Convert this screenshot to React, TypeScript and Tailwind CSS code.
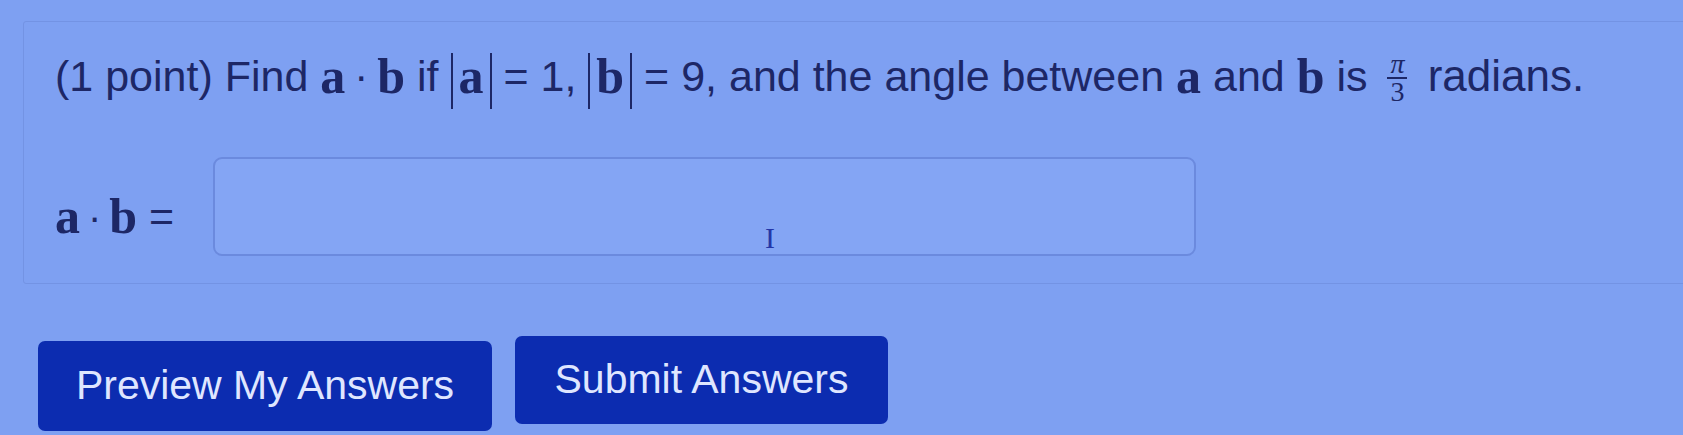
import React from "react";

const sans = { fontFamily: '"Liberation Sans", Arial, sans-serif' };
const serif = { fontFamily: '"Liberation Serif", "DejaVu Serif", serif' };

// bold vector letter
function B({ children }: { children: React.ReactNode }) {
  return (
    <span className="font-bold text-[50px]" style={serif}>
      {children}
    </span>
  );
}

function Abs({ children }: { children: React.ReactNode }) {
  return (
    <span className="inline-flex items-center">
      <span className="inline-block w-[2px] h-[56px] bg-[#1d2766] mr-[6px] translate-y-[5px]" />
      {children}
      <span className="inline-block w-[2px] h-[56px] bg-[#1d2766] ml-[6px] translate-y-[5px]" />
    </span>
  );
}

export default function App() {
  return (
    <div className="w-[1683px] h-[435px] overflow-hidden bg-[#7ea0f2] text-[#1d2766]" style={sans}>
      {/* problem box */}
      <div className="ml-[23px] mt-[21px] w-[1700px] h-[263px] border border-[#7393e4] rounded-[3px] pl-[31px] pt-[22px]">
        <p className="text-[43px] leading-[64px] whitespace-nowrap flex items-center">
          <span>(1 point) Find&nbsp;</span>
          <B>a</B>
          <span className="mx-[9px] text-[42px]">·</span>
          <B>b</B>
          <span>&nbsp;if&nbsp;</span>
          <Abs><B>a</B></Abs>
          <span>&nbsp;= 1,&nbsp;</span>
          <Abs><B>b</B></Abs>
          <span>&nbsp;= 9, and the angle between&nbsp;</span>
          <B>a</B>
          <span>&nbsp;and&nbsp;</span>
          <B>b</B>
          <span>&nbsp;is&nbsp;</span>
          <span
            className="inline-flex flex-col items-center mx-[8px] translate-y-[2px] text-[28px] leading-[26px]"
            style={serif}
          >
            <span className="italic">π</span>
            <span className="block w-[20px] h-[2px] bg-[#1d2766]" />
            <span>3</span>
          </span>
          <span className="text-[44px]">&nbsp;radians.</span>
        </p>

        <div className="flex items-center mt-[49px]">
          <span className="flex items-center text-[43px] whitespace-nowrap w-[158px] translate-y-[10px]">
            <B>a</B>
            <span className="mx-[8px] text-[40px]">·</span>
            <B>b</B>
            <span>&nbsp;=</span>
          </span>
          <div className="relative w-[983px] h-[99px] border-2 border-[#6b8ade] rounded-[9px] bg-[#84a5f4]">
            <span className="absolute left-[550px] top-[64px] text-[#2436a8] text-[30px] leading-none" style={serif}>
              I
            </span>
          </div>
        </div>
      </div>

      {/* buttons */}
      <div className="flex items-start gap-[23px] ml-[38px] mt-[52px]">
        <button className="w-[454px] h-[90px] mt-[5px] rounded-[7px] bg-[#0c2cb0] text-[#dfe6ff] text-[41px]" style={sans}>
          Preview My Answers
        </button>
        <button className="w-[373px] h-[88px] rounded-[7px] bg-[#0c2cb0] text-[#dfe6ff] text-[41px]" style={sans}>
          Submit Answers
        </button>
      </div>
    </div>
  );
}
